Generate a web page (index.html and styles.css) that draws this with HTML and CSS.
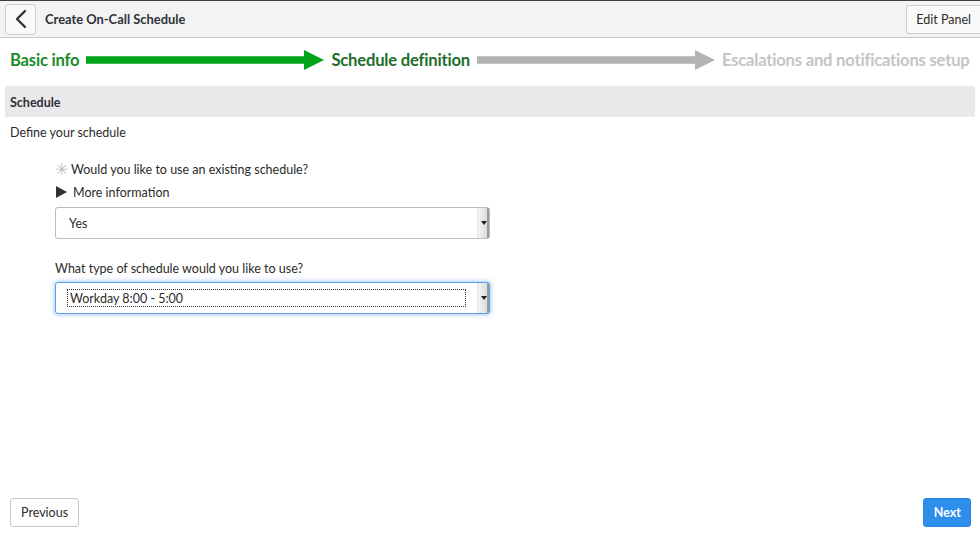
FILE: index.html
```html
<!DOCTYPE html>
<html>
<head>
<meta charset="utf-8">
<link rel="stylesheet" href="styles.css">
</head>
<body>
<div class="page">
  <header class="topbar">
    <button class="back" aria-label="Back">
      <svg width="14" height="20" viewBox="0 0 14 20"><path d="M11 2 L3 10 L11 18" fill="none" stroke="#333" stroke-width="2.4" stroke-linecap="round" stroke-linejoin="round"/></svg>
    </button>
    <div class="title">Create On-Call Schedule</div>
    <button class="edit">Edit Panel</button>
  </header>

  <nav class="steps">
    <span class="step done">Basic info</span>
    <svg class="arrow" viewBox="0 0 238 22" preserveAspectRatio="none"><path d="M0 7 H218 V0 L238 11 L218 22 V15 H0 Z" fill="#00a51c"/></svg>
    <span class="step current">Schedule definition</span>
    <svg class="arrow" viewBox="0 0 238 22" preserveAspectRatio="none"><path d="M0 7 H218 V0 L238 11 L218 22 V15 H0 Z" fill="#b3b3b3"/></svg>
    <span class="step todo">Escalations and notifications setup</span>
  </nav>

  <section class="section">
    <div class="section-head">Schedule</div>
    <p class="intro">Define your schedule</p>

    <div class="form">
      <div class="label"><span class="req">✳</span>Would you like to use an existing schedule?</div>
      <div class="more"><span class="tri"></span>More information</div>
      <div class="select">
        <span class="value">Yes</span>
        <span class="caret"></span>
      </div>

      <div class="label second">What type of schedule would you like to use?</div>
      <div class="select focused">
        <span class="value"><span class="focusring">Workday 8:00 - 5:00</span></span>
        <span class="caret"></span>
      </div>
    </div>
  </section>

  <footer class="footer">
    <button class="btn prev">Previous</button>
    <button class="btn next">Next</button>
  </footer>
</div>
</body>
</html>
```
FILE: styles.css
```css
* { box-sizing: border-box; }
html, body { margin: 0; padding: 0; background: #fff; }
body { font-family: "Lato", "Liberation Sans", sans-serif; color: #2b2b2b; font-size: 13px; }
.page { width: 980px; height: 538px; display: flex; flex-direction: column; }

.topbar {
  height: 38px;
  background: #f3f3f4;
  border-top: 1px solid #3a3f48;
  border-bottom: 1px solid #c9c9cc;
  display: flex; align-items: center;
  padding: 0 0 0 5px;
}
.back {
  width: 31px; height: 31px;
  background: #f9f9f9;
  border: 1px solid #cfcfd2; border-radius: 3px;
  display: flex; align-items: center; justify-content: center;
  padding: 0; margin-top: 0;
}
.title { font-weight: 700; font-size: 12.9px; color: #2e3238; margin-left: 9px; flex: 1; }
.edit {
  height: 29px; padding: 0 9px;
  background: #f9f9f9; border: 1px solid #cfcfd2; border-radius: 3px 0 0 3px; border-right: none;
  font-family: inherit; font-size: 12.5px; color: #2b2b2b;
  align-self: center;
}

.steps { display: flex; align-items: center; height: 44px; padding: 0 8px 0 10px; }
.step { font-weight: 700; font-size: 16.6px; white-space: nowrap; letter-spacing: -0.2px; }
.step.done { color: #1b8a28; }
.step.current { color: #1e6e2b; }
.step.todo { color: #c4c4c4; }
.arrow { width: 238px; height: 20px; margin: 0 7px; flex: none; }

.section { padding: 0 5px; flex: 1; }
.section-head {
  background: #e9e9eb; height: 31px; display: flex; align-items: center;
  padding-left: 5px; padding-top: 2px; font-weight: 700; font-size: 12.5px; color: #2e3238;
  margin-top: 4px;
}
.intro { margin: 8px 0 0 5px; font-size: 12.5px; color: #2b2b2b; }

.form { padding-left: 50px; width: 485px; margin-top: 20px; }
.label { font-size: 12.5px; display: flex; align-items: center; height: 18px; }
.req { color: #bcbcbc; font-size: 16px; width: 16px; line-height: 1; }
.more { font-size: 12.5px; display: flex; align-items: center; height: 18px; margin-top: 5px; }
.tri { width: 0; height: 0; border-left: 11px solid #333; border-top: 6.5px solid transparent; border-bottom: 6.5px solid transparent; margin: 0 6px 0 1px; }

.select {
  margin-top: 6px;
  height: 32px; border: 1px solid #bdbdc0; border-radius: 3px;
  display: flex; align-items: stretch; background: #fff;
}
.select .value { flex: 1; display: flex; align-items: center; padding-left: 13px; font-size: 12.5px; }
.caret {
  width: 12px;
  background: linear-gradient(to right, #f4f4f4, #dcdcdc);
  border-left: 1px solid #e5e5e5;
  border-right: 2px solid #9a9a9a;
  position: relative;
}
.caret::after {
  content: ""; position: absolute; left: 3px; top: 13px;
  border-top: 4px solid #222; border-left: 3px solid transparent; border-right: 3px solid transparent;
}
.label.second { margin-top: 20px; }
.select.focused {
  border-color: #5d9fe6;
  box-shadow: 0 0 4px 1px rgba(100, 160, 240, 0.55);
  margin-top: 5px;
}
.select.focused .value { padding-left: 11px; padding-right: 11px; }
.focusring {
  flex: 1; border: 1px dotted #333; height: 18px; display: flex; align-items: center; padding-left: 2px;
}

.footer { display: flex; justify-content: space-between; padding: 0 9px 11px 10px; }
.btn { height: 29px; border-radius: 3px; font-family: inherit; font-size: 12.5px; padding: 0 10px; }
.prev { background: #fff; border: 1px solid #c8c8cc; color: #2b2b2b; }
.next { background: #2d8eec; border: 1px solid #2785e0; color: #fff; font-weight: 700; padding: 0 9px 0 10px; }
```
